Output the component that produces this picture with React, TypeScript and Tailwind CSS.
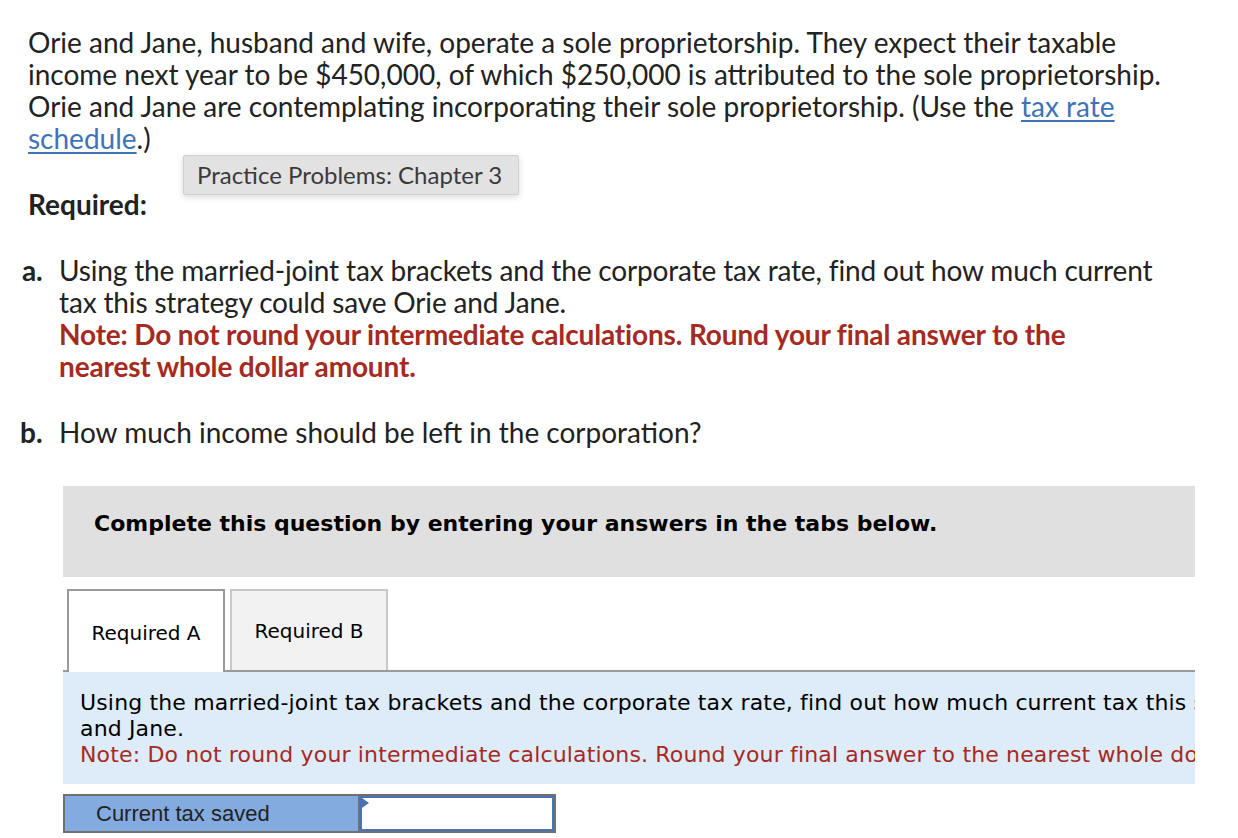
import React from 'react';

const sans = "font-['Lato','Open_Sans',sans-serif]";
const verdana = "font-['DejaVu_Sans','Verdana',sans-serif]";

const App: React.FC = () => {
  return (
    <div className="bg-white min-h-screen w-[1238px] overflow-hidden text-[#222]">
      <div className={`relative pt-[26px] pl-[28px] ${sans}`}>
        <p className="text-[28px] leading-[32px] w-[1200px] whitespace-nowrap">
          Orie and Jane, husband and wife, operate a sole proprietorship. They expect their taxable
          <br />
          income next year to be $450,000, of which $250,000 is attributed to the sole proprietorship.
          <br />
          Orie and Jane are contemplating incorporating their sole proprietorship. (Use the{' '}
          <a href="#" className="text-[#3f73b8] underline underline-offset-[3px]">tax rate</a>
          <br />
          <a href="#" className="text-[#3f73b8] underline underline-offset-[3px]">schedule</a>.)
        </p>

        <div className="absolute left-[183px] top-[155px] h-[40px] w-[336px] bg-[#e2e2e2] border border-[#d0d0d0] rounded-[2px] shadow-[0_2px_6px_rgba(0,0,0,0.15)] flex items-center pl-[13px] text-[24px] text-[#3a3a3a]">
          Practice Problems: Chapter 3
        </div>

        <h2 className="mt-[34px] text-[28px] leading-[32px] font-bold">Required:</h2>

        <div className="mt-[34px] flex text-[28px] leading-[32px] -ml-[6px] whitespace-nowrap tracking-[-0.15px]">
          <span className="w-[37px] font-bold">a.</span>
          <div>
            <p>
              Using the married-joint tax brackets and the corporate tax rate, find out how much current
              <br />
              tax this strategy could save Orie and Jane.
            </p>
            <p className="font-bold text-[#a52a22]">
              Note: Do not round your intermediate calculations. Round your final answer to the
              <br />
              nearest whole dollar amount.
            </p>
          </div>
        </div>

        <div className="mt-[34px] flex text-[28px] leading-[32px] -ml-[8px]">
          <span className="w-[39px] font-bold">b.</span>
          <p>How much income should be left in the corporation?</p>
        </div>
      </div>

      <div className={`ml-[63px] mt-[38px] w-[1132px] overflow-hidden ${verdana}`}>
        <div className="h-[91px] bg-[#e0e0e0] pt-[24px] pl-[31px] text-[22px] leading-[28px] font-bold text-black">
          Complete this question by entering your answers in the tabs below.
        </div>

        <div className="mt-[12px] flex items-end border-b-2 border-[#9a9a9a] pl-[4px] gap-[5px]">
          <div className="relative -mb-[2px] h-[83px] w-[158px] bg-white border-2 border-b-0 border-[#9a9a9a] flex items-center justify-center text-[20px] text-black">
            <span className="mt-[2px]">Required A</span>
          </div>
          <div className="h-[81px] w-[158px] bg-[#f2f2f2] border-2 border-b-0 border-[#c8c8c8] flex items-center justify-center text-[20px] text-black">
            Required B
          </div>
        </div>

        <div className="h-[112px] bg-[#deebf8] pl-[17px] pt-[18px]">
          <div className="text-[22px] leading-[26px] tracking-[0.15px] whitespace-nowrap">
            <p className="text-black">
              Using the married-joint tax brackets and the corporate tax rate, find out how much current tax this strategy could save Orie
              <br />
              and Jane.
            </p>
            <p className="text-[#a52a22]">
              Note: Do not round your intermediate calculations. Round your final answer to the nearest whole dollar amount.
            </p>
          </div>
        </div>

        <div className="mt-[10px] flex h-[39px] w-[493px] border-2 border-[#707070] bg-[#707070] gap-[2px]">
          <div className="flex-1 bg-[#84abdf] flex items-center pl-[31px] text-[22px] font-['Liberation_Sans',Arial,sans-serif] text-[#222]">
            Current tax saved
          </div>
          <div className="relative w-[194px] bg-white border-2 border-[#4a73b5]">
            <span className="absolute left-0 top-0 w-0 h-0 border-t-[5px] border-b-[5px] border-l-[7px] border-t-transparent border-b-transparent border-l-[#4a73b5]" />
            <input type="text" className="w-full h-full outline-none bg-transparent" />
          </div>
        </div>
      </div>
    </div>
  );
};

export default App;
